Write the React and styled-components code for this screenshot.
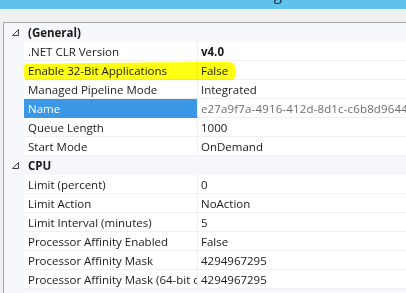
import React from "react";
import styled, { createGlobalStyle } from "styled-components";

const Global = createGlobalStyle`
  html, body { margin: 0; padding: 0; background: #f0f0f0; overflow: hidden; }
  body { width: 406px; height: 293px; font-family: "Open Sans", "Noto Sans", sans-serif; }
`;

const Frame = styled.div`
  width: 406px;
  height: 293px;
  display: flex;
  flex-direction: column;
  overflow: hidden;
  background: #f0f0f0;
`;

const TitleBar = styled.div`
  height: 9px;
  flex: none;
  background: #5fc2ea;
  overflow: hidden;
  display: flex;
  justify-content: center;
`;

const TitleText = styled.span`
  font-family: "Open Sans", sans-serif;
  font-size: 15px;
  line-height: 18px;
  margin-top: -15px;
  padding-left: 44px;
  color: #1e2a44;
  white-space: nowrap;
`;

const Strip = styled.div`
  height: 13px;
  flex: none;
`;

const Body = styled.div`
  flex: 1;
  display: flex;
  margin-left: 3px;
  border-top: 1px solid #a5a5a5;
  border-left: 1px solid #a5a5a5;
  min-height: 0;
`;

const Grid = styled.div`
  flex: 1;
  position: relative;
  background: #f5f7fa;
  padding-right: 1px;
  border-right: 1px solid #f0f0f0;
`;

const CatRow = styled.div`
  height: 19px;
  box-sizing: border-box;
  display: flex;
  align-items: center;
  background: #f5f7fa;
`;

const Gutter = styled.div`
  width: 20px;
  flex: none;
  display: flex;
  align-items: center;
  justify-content: center;
  padding-left: 2px;
  box-sizing: border-box;
`;

const CatLabel = styled.span`
  font-size: 11.5px;
  font-weight: 700;
  color: #1a1a1a;
  padding-left: 4px;
`;

const PropRow = styled.div`
  height: 19px;
  display: flex;
  position: relative;
`;

const NameCell = styled.div`
  width: 174px;
  flex: none;
  display: flex;
  align-items: center;
  padding-left: 4px;
  box-sizing: border-box;
  font-size: 11.5px;
  white-space: nowrap;
  overflow: hidden;
  background: ${(p) => (p.$selected ? "#3c98e6" : "#ffffff")};
  color: ${(p) => (p.$selected ? "#ffffff" : "#1a1a1a")};
  border-bottom: 1px solid ${(p) => (p.$selected ? "#3c98e6" : "#f0f0f0")};
  border-right: 1px solid #f0f0f0;
`;

const ValueCell = styled.div`
  flex: 1;
  min-width: 0;
  display: flex;
  align-items: center;
  padding-left: 3px;
  font-size: 11.5px;
  letter-spacing: ${(p) => (p.$readonly ? "0.15px" : "0")};
  white-space: nowrap;
  overflow: hidden;
  background: #ffffff;
  border-bottom: 1px solid #f0f0f0;
  color: ${(p) => (p.$readonly ? "#6d6d6d" : "#1a1a1a")};
  font-weight: ${(p) => (p.$bold ? 700 : 400)};
`;

const Marker = styled.svg`
  position: absolute;
  left: 0;
  top: 0;
  pointer-events: none;
  mix-blend-mode: multiply;
  overflow: visible;
`;

const Scrollbar = styled.div`
  width: 12px;
  flex: none;
  border-left: 1px solid #a5a5a5;
  background: #f0f0f0;
  display: flex;
  flex-direction: column;
`;

const ScrollButton = styled.div`
  height: 15px;
  display: flex;
  align-items: center;
  justify-content: center;
`;

const Thumb = styled.div`
  height: 126px;
  margin-left: 1px;
  background: #cdcdcd;
  display: flex;
  align-items: center;
  justify-content: flex-start;
`;

const Expander = () => (
  <svg width="7" height="7" viewBox="0 0 7 7">
    <path d="M6.5 0.5 L6.5 6.5 L0.5 6.5 Z" fill="none" stroke="#404040" strokeWidth="1" />
  </svg>
);

const Grip = () => (
  <svg width="8" height="7" viewBox="0 0 8 7">
    <rect x="0" y="0" width="8" height="1" fill="#606060" />
    <rect x="0" y="3" width="8" height="1" fill="#606060" />
    <rect x="0" y="6" width="8" height="1" fill="#606060" />
  </svg>
);

const UpArrow = () => (
  <svg width="9" height="6" viewBox="0 0 9 6">
    <path d="M1 5 L4.5 1.5 L8 5" fill="none" stroke="#606060" strokeWidth="1.2" />
  </svg>
);

const Highlight = () => (
  <Marker width="232" height="22" viewBox="0 0 232 22">
    <path
      d="M21 3 C80 2 160 1 224 1 C231 1 233 6 232 12 C231 19 228 21 222 21 C150 21 80 21 22 20 C19 16 19 7 21 3 Z"
      fill="#ffff14"
    />
  </Marker>
);

const sections = [
  {
    title: "(General)",
    rows: [
      { name: ".NET CLR Version", value: "v4.0", bold: true },
      { name: "Enable 32-Bit Applications", value: "False", marked: true },
      { name: "Managed Pipeline Mode", value: "Integrated" },
      { name: "Name", value: "e27a9f7a-4916-412d-8d1c-c6b8d9644e12", selected: true, readonly: true },
      { name: "Queue Length", value: "1000" },
      { name: "Start Mode", value: "OnDemand" },
    ],
  },
  {
    title: "CPU",
    rows: [
      { name: "Limit (percent)", value: "0" },
      { name: "Limit Action", value: "NoAction" },
      { name: "Limit Interval (minutes)", value: "5" },
      { name: "Processor Affinity Enabled", value: "False" },
      { name: "Processor Affinity Mask", value: "4294967295" },
      { name: "Processor Affinity Mask (64-bit option)", value: "4294967295" },
    ],
  },
];

export default function App() {
  return (
    <Frame>
      <Global />
      <TitleBar>
        <TitleText>Advanced Settings</TitleText>
      </TitleBar>
      <Strip />
      <Body>
        <Grid>
          {sections.map((s) => (
            <React.Fragment key={s.title}>
              <CatRow>
                <Gutter>
                  <Expander />
                </Gutter>
                <CatLabel>{s.title}</CatLabel>
              </CatRow>
              {s.rows.map((r) => (
                <PropRow key={r.name}>
                  <Gutter />
                  <NameCell $selected={r.selected}>{r.name}</NameCell>
                  <ValueCell $bold={r.bold} $readonly={r.readonly}>{r.value}</ValueCell>
                  {r.marked && <Highlight />}
                </PropRow>
              ))}
            </React.Fragment>
          ))}
        </Grid>
        <Scrollbar>
          <ScrollButton>
            <UpArrow />
          </ScrollButton>
          <Thumb>
            <Grip />
          </Thumb>
        </Scrollbar>
      </Body>
    </Frame>
  );
}
